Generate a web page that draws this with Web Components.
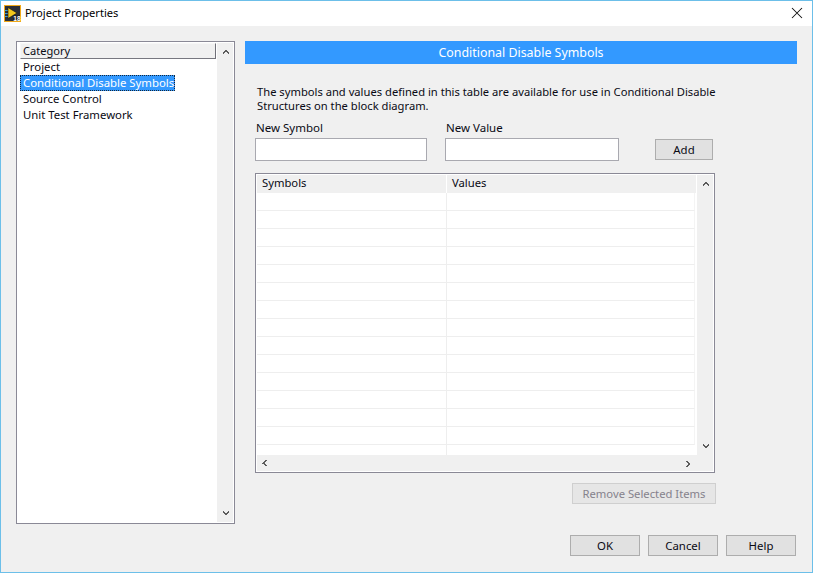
<!DOCTYPE html>
<html><head><meta charset="utf-8"><style>
html,body{margin:0;padding:0;height:573px;overflow:hidden}
body{font:11.3px/15px "Noto Sans",sans-serif;color:#0a0a14}
</style></head><body>
<app-window></app-window>
<script>
function def(name,html,init){customElements.define(name,class extends HTMLElement{connectedCallback(){if(this.shadowRoot)return;const r=this.attachShadow({mode:'open'});r.innerHTML=html;init&&init(r,this)}})}
def('ui-chevron',`<style>:host{display:block;width:7px;height:5px;line-height:0}:host([dir=left]),:host([dir=right]){width:5px;height:7px}svg{display:block}</style><svg width="7" height="5" viewBox="0 0 7 5" shape-rendering="crispEdges"><path fill="#5c5c5c" d="M3 0h1v1h1v1h1v1h1v2h-1v-1h-1v-1h-2v1h-1v1h-1v-2h1v-1h1v-1h1z"/></svg>`,(r,h)=>{const d=h.getAttribute('dir');const s=r.querySelector('svg'),p=r.querySelector('path');
 if(d=='left'||d=='right'){s.setAttribute('width',5);s.setAttribute('height',7);s.setAttribute('viewBox','0 0 5 7');p.setAttribute('transform',d=='left'?'translate(0 7) rotate(-90)':'translate(5 0) rotate(90)')}
 if(d=='down')p.setAttribute('transform','translate(0 5) scale(1 -1)')});
def('ui-button',`<style>:host{display:flex;align-items:center;justify-content:center;box-sizing:border-box;height:21px;border:1px solid #adadad;background:#e1e1e1;font-size:11.4px;line-height:15px;width:var(--w,70px)}
:host([disabled]){background:#e6e6e6;border-color:#cfcfcf;color:#85828c;font-size:11.25px}</style><slot></slot>`);
def('ui-input',`<style>:host{display:block;box-sizing:border-box;height:23px;background:#fff;border:1px solid #a9a9b0;width:var(--w,172px)}</style>`);
def('title-bar',`<style>:host{display:flex;align-items:center;height:25px;background:#fff;padding-left:3px}
.t{margin-left:4px;font-size:11.15px;line-height:16px;color:#000;flex:1;margin-top:-1px}
.x{width:14px;height:14px;margin-right:8px;margin-top:-1px}svg{display:block}text{font:bold 6.5px "Liberation Sans",sans-serif;fill:#fff}</style>
<svg width="17" height="17" viewBox="0 0 17 17"><rect x=".5" y=".5" width="16" height="16" fill="#2b2f38" stroke="#f0a818"/><path d="M1 5.5H5M1 8.5H5M1 11.5H5" stroke="#3aa0d8"/><path d="M4 2.5L13 8 4 13.5Z" fill="#f2c81e" stroke="#111" stroke-width=".6"/><rect x="9" y="10" width="7" height="6" fill="#23252c"/><text x="9.3" y="15.6">18</text></svg>
<span class="t"><slot></slot></span>
<svg class="x" viewBox="0 0 14 14"><path d="M2 2L12 12M12 2L2 12" stroke="#111" stroke-width="1.05"/></svg>`);
def('category-list',`<style>:host{display:flex;box-sizing:border-box;width:219px;height:483px;border:1px solid #8a8996;background:#fff;padding:1px;flex:none}
.l{flex:1;min-width:0;padding:0 0 0 2px;font-size:11.35px}
.h{box-sizing:border-box;height:16px;border:1px solid;border-color:#f7f7f7 #6f6f78 #77777f #f7f7f7;background:#f0f0f0;padding-left:2px;line-height:14px;font-size:11.1px}
.i{height:16px;line-height:16px;padding-left:3px;white-space:nowrap}
.s{display:inline-block;background:#3399ff;color:#fff;outline:1px dotted #14283c;outline-offset:-1px;margin-left:-3px;padding:0 1px 0 3px;height:16px}
.b{width:16px;margin-left:1px;background:#f0f0f0;display:flex;flex-direction:column;justify-content:space-between;align-items:center;padding:6px 0}
</style><div class="l"><div class="h">Category</div><div class="i">Project</div><div class="i"><span class="s">Conditional Disable Symbols</span></div><div class="i">Source Control</div><div class="i">Unit Test Framework</div></div>
<div class="b"><ui-chevron dir="up"></ui-chevron><ui-chevron dir="down"></ui-chevron></div>`);
const rows=Array.from({length:14},()=>'<div class="r"><i></i></div>').join('');
def('symbol-table',`<style>:host{display:flex;flex-direction:column;box-sizing:border-box;width:460px;height:300px;border:1px solid #8a8996;background:#fff;padding:1px}
.m{display:flex;flex:1;min-height:0}.g{flex:1;min-width:0;overflow:hidden}
.h{display:flex;height:18px;background:#f0f0f0;font-size:11.25px;line-height:16px}
.h span:first-child{padding-left:5px;border-right:1px solid #fff;width:184px}.h span:last-child{padding-left:5px}
.r{height:18px;box-sizing:border-box;border-bottom:1px solid #eeeeee;display:flex;margin-right:1px;border-right:1px solid #f4f4f4}
.r i{display:block;width:189px;height:100%;border-right:1px solid #eeeeee}
.t{height:10px;display:flex}.t i{display:block;width:189px;border-right:1px solid #eeeeee}
.v{width:16px;margin-left:1px;background:#f0f0f0;display:flex;flex-direction:column;justify-content:space-between;align-items:center;padding:6px 0}
.hb{height:16px;background:#f0f0f0;display:flex;justify-content:space-between;align-items:center;padding:0 22px 0 5px}
</style><div class="m"><div class="g"><div class="h"><span>Symbols</span><span>Values</span></div>${rows}<div class="t"><i></i></div></div>
<div class="v"><ui-chevron dir="up"></ui-chevron><ui-chevron dir="down"></ui-chevron></div></div>
<div class="hb"><ui-chevron dir="left"></ui-chevron><ui-chevron dir="right"></ui-chevron></div>`);
def('props-pane',`<style>:host{display:block;width:552px;flex:none;position:relative}
.ban{height:23px;background:#3399ff;color:#fff;text-align:center;font-size:12.4px;line-height:24px}
.p{margin:21px 0 0 12px;width:480px;line-height:14px;font-size:11.2px;height:29px}
.f{display:flex;margin:7px 0 0 10px}
.c{display:flex;flex-direction:column}.c label{padding-left:1px;height:17px;line-height:14px;font-size:11.5px}
.add{margin:18px 0 0 36px}
.tb{margin:12px 0 0 10px}
.rm{margin:10px 0 0 327px}
.bt{display:flex;gap:8px;margin:31px 0 0 325px}
</style><div class="ban">Conditional Disable Symbols</div>
<div class="p">The symbols and values defined in this table are available for use in Conditional Disable Structures on the block diagram.</div>
<div class="f"><div class="c" style="margin-right:18px"><label>New Symbol</label><ui-input></ui-input></div><div class="c"><label>New Value</label><ui-input style="--w:174px"></ui-input></div><ui-button class="add" style="--w:58px">Add</ui-button></div>
<symbol-table class="tb"></symbol-table>
<ui-button class="rm" disabled style="--w:144px">Remove Selected Items</ui-button>
<div class="bt"><ui-button>OK</ui-button><ui-button>Cancel</ui-button><ui-button>Help</ui-button></div>`);
def('app-window',`<style>:host{display:flex;flex-direction:column;box-sizing:border-box;width:813px;height:573px;border:1px solid #6cbfe9;background:#f0f0f0}
.c{display:flex;gap:10px;padding:15px 0 0 15px}</style>
<title-bar>Project Properties</title-bar><div class="c"><category-list></category-list><props-pane></props-pane></div>`);
</script></body></html>
